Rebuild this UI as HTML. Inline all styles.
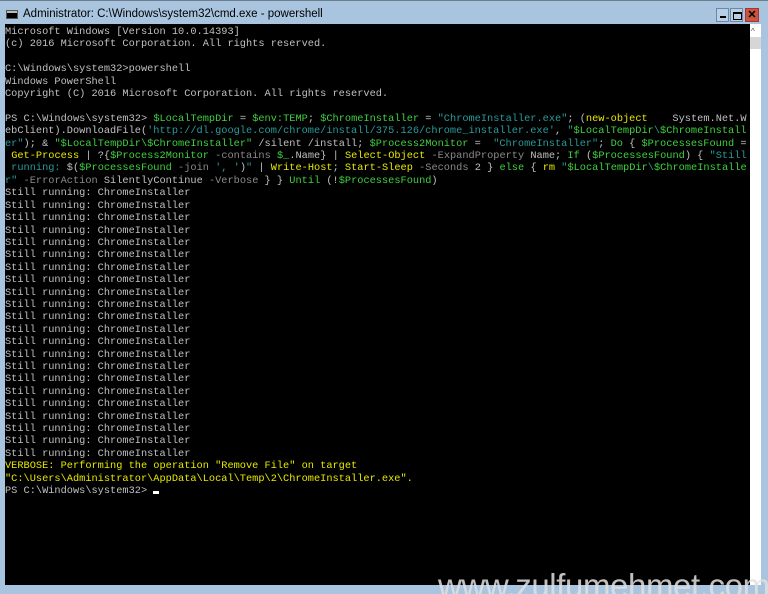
<!DOCTYPE html>
<html><head><meta charset="utf-8"><style>
html,body{margin:0;padding:0;width:768px;height:594px;overflow:hidden;background:#a9c4df;position:relative;font-family:"Liberation Sans",sans-serif}
#top{position:absolute;left:0;top:0;width:768px;height:1px;background:#6e7f90}
#title{position:absolute;left:23px;top:8px;font-size:11.5px;color:#000;white-space:nowrap}
#icon{position:absolute;left:6px;top:10px;width:12px;height:9px;background:#000;border:1px solid #555;box-sizing:border-box}
#icon:before{content:"";position:absolute;left:0;top:0;right:0;height:2px;background:#bbb}
.btn{position:absolute;top:8px;width:13px;height:14px;border:1px solid #6d87a4;box-sizing:border-box;background:#b9cfe6}
#con{position:absolute;left:5px;top:24px;width:745px;height:561px;background:#000;overflow:hidden}
#sb{position:absolute;left:750px;top:24px;width:11px;height:561px;background:#fff}
#thumb{position:absolute;left:750px;top:37px;width:11px;height:12px;background:#d6d6d6}
pre{margin:0;position:absolute;left:0;top:0;font-family:"Liberation Mono",monospace;font-size:10.3px;line-height:12.4px;color:#c0c0c0;white-space:pre}
.g{color:#3fd13f}.y{color:#e8e800}.t{color:#2a9a9a}.d{color:#8a8a8a}
#wm{position:absolute;left:438px;top:569px;font-size:33px;line-height:33px;color:rgba(225,225,225,.85);letter-spacing:-0.4px;white-space:nowrap}
</style></head><body>
<div id="top"></div>
<div id="icon"></div>
<div id="title">Administrator: C:\Windows\system32\cmd.exe - powershell</div>
<div class="btn" style="left:716px"><div style="position:absolute;left:3px;top:7px;width:6px;height:2px;background:#000"></div></div>
<div class="btn" style="left:730px"><div style="position:absolute;left:2px;top:3px;width:7px;height:5px;border:1px solid #000;border-top-width:2px"></div></div>
<div class="btn" style="left:745px;width:14px;background:#c9553f;border-color:#a33;color:#000;font-size:11px;font-weight:bold;text-align:center;line-height:12px">✕</div>
<div id="con"><pre style="top:2px">Microsoft Windows [Version 10.0.14393]
(c) 2016 Microsoft Corporation. All rights reserved.

C:\Windows\system32&gt;powershell
Windows PowerShell
Copyright (C) 2016 Microsoft Corporation. All rights reserved.

PS C:\Windows\system32&gt; <span class="g">$LocalTempDir</span> = <span class="g">$env:TEMP</span>; <span class="g">$ChromeInstaller</span> = <span class="t">"ChromeInstaller.exe"</span>; (<span class="y">new-object</span>    System.Net.W
ebClient).DownloadFile(<span class="t">'http://dl.google.com/chrome/install/375.126/chrome_installer.exe'</span>, <span class="t">"</span><span class="g">$LocalTempDir</span><span class="t">\</span><span class="g">$ChromeInstall</span>
<span class="t">er"</span>); &amp; <span class="g">"$LocalTempDir\$ChromeInstaller"</span> /silent /install; <span class="g">$Process2Monitor</span> =  <span class="t">"ChromeInstaller"</span>; <span class="g">Do</span> { <span class="g">$ProcessesFound</span> =
 <span class="y">Get-Process</span> | ?{<span class="g">$Process2Monitor</span> <span class="d">-contains</span> <span class="g">$_</span>.Name} | <span class="y">Select-Object</span> <span class="d">-ExpandProperty</span> Name; <span class="g">If</span> (<span class="g">$ProcessesFound</span>) { <span class="t">"Still</span>
<span class="t"> running: </span>$(<span class="g">$ProcessesFound</span> <span class="d">-join</span> <span class="t">', '</span>)<span class="t">"</span> | <span class="y">Write-Host</span>; <span class="y">Start-Sleep</span> <span class="d">-Seconds</span> 2 } <span class="g">else</span> { <span class="y">rm</span> <span class="t">"</span><span class="g">$LocalTempDir</span><span class="t">\</span><span class="g">$ChromeInstalle</span>
<span class="t">r"</span> <span class="d">-ErrorAction</span> SilentlyContinue <span class="d">-Verbose</span> } } <span class="g">Until</span> (!<span class="g">$ProcessesFound</span>)
Still running: ChromeInstaller
Still running: ChromeInstaller
Still running: ChromeInstaller
Still running: ChromeInstaller
Still running: ChromeInstaller
Still running: ChromeInstaller
Still running: ChromeInstaller
Still running: ChromeInstaller
Still running: ChromeInstaller
Still running: ChromeInstaller
Still running: ChromeInstaller
Still running: ChromeInstaller
Still running: ChromeInstaller
Still running: ChromeInstaller
Still running: ChromeInstaller
Still running: ChromeInstaller
Still running: ChromeInstaller
Still running: ChromeInstaller
Still running: ChromeInstaller
Still running: ChromeInstaller
Still running: ChromeInstaller
Still running: ChromeInstaller
<span class="y">VERBOSE: Performing the operation "Remove File" on target
"C:\Users\Administrator\AppData\Local\Temp\2\ChromeInstaller.exe".</span>
PS C:\Windows\system32&gt; <span style="display:inline-block;width:6px;height:3px;background:#fff;vertical-align:-1px"></span></pre></div>
<div id="sb"></div>
<div id="thumb"></div>
<div style="position:absolute;left:751px;top:27px;font-size:8px;color:#555">^</div>
<div id="wm">www.zulfumehmet.com</div>
</body></html>
